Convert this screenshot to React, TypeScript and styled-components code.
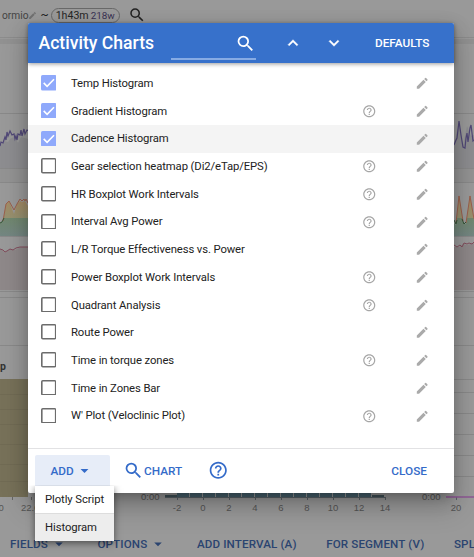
import styled, { createGlobalStyle } from 'styled-components';
import {
    MdArrowDropDown,
    MdEdit,
    MdHelpOutline,
    MdKeyboardArrowDown,
    MdKeyboardArrowUp,
    MdSearch,
} from 'react-icons/md';

const GlobalStyle = createGlobalStyle`
    * {
        box-sizing: border-box;
    }

    body {
        margin: 0;
        overflow: hidden;
        font-family: Roboto, sans-serif;
        color: #222;
    }

    button {
        font-family: inherit;
        border: none;
        background: none;
        padding: 0;
        white-space: nowrap;
    }

    svg {
        display: block;
        flex: none;
    }
`;

const Page = styled.div`
    position: relative;
    width: 474px;
    height: 557px;
    overflow: hidden;
    background: #999;
`;

const TopBar = styled.div`
    display: flex;
    align-items: center;
    height: 38px;
    padding: 0 0 7px 2px;
    font-size: 10.2px;
    color: #444;
    border-bottom: 1px solid #8c8c8c;
`;

const Tilde = styled.span`
    margin-left: 3px;
    font-size: 12px;
    color: #252525;
`;

const Pill = styled.span`
    display: flex;
    align-items: center;
    gap: 2px;
    height: 15px;
    margin: 0 8px 0 2px;
    padding: 0 4px;
    border: 1px solid #686868;
    border-radius: 8px;
    font-size: 10.6px;
    color: #252525;

    b {
        font-weight: 400;
        font-size: 9.9px;
        color: #393253;
    }
`;

const Charts = styled.div`
    height: 485px;
`;

const ActionBar = styled.div`
    display: flex;
    align-items: center;
    height: 41px;
    padding: 0 0 0 10px;
`;

const Action = styled.button`
    display: flex;
    align-items: center;
    flex: none;
    margin-right: 29.5px;
    font-size: 11.6px;
    font-weight: 500;
    letter-spacing: 0.14px;
    color: #2b4470;

    svg {
        margin-left: 2px;
    }
`;

const Dialog = styled.div`
    position: absolute;
    top: 23px;
    left: 28px;
    width: 426px;
    height: 469.5px;
    display: flex;
    flex-direction: column;
    background: #fff;
    border-radius: 2px;
    box-shadow: 0 7px 10px -5px rgba(0, 0, 0, 0.2), 0 14px 26px 2px rgba(0, 0, 0, 0.18), 0 5px 18px 2px rgba(0, 0, 0, 0.12);
`;

const Header = styled.div`
    display: flex;
    align-items: center;
    height: 40px;
    padding-left: 10.5px;
    color: #fff;
    background: #3771cb;
    border-radius: 2px 2px 0 0;
    box-shadow: 0 1px 4px rgba(0, 0, 0, 0.4);
`;

const Title = styled.h1`
    width: 132.5px;
    margin: 1px 0 0;
    font-size: 17.6px;
    line-height: 1;
    font-weight: 500;
    white-space: nowrap;
`;

const SearchField = styled.div`
    display: flex;
    justify-content: flex-end;
    align-items: center;
    width: 85px;
    height: 28px;
    margin: 6px 16px 0 0;
    padding-bottom: 4px;
    border-bottom: 2px solid #86abe4;
`;

const ArrowButton = styled.button`
    display: flex;
    justify-content: center;
    width: 41px;
    color: #fff;

    path:not([fill='none']) {
        stroke: currentColor;
        stroke-width: 0.5px;
    }

    path[fill='none'] {
        stroke: none;
    }
`;

const Defaults = styled.button`
    margin-left: 21px;
    font-size: 11.8px;
    font-weight: 500;
    color: #fff;
`;

const List = styled.div`
    flex: 1;
    padding-top: 6.7px;
`;

const Row = styled.div<{ $active: boolean }>`
    display: flex;
    align-items: center;
    height: 27.7px;
    padding: 0 24.5px 0 12.5px;
    background: ${({ $active }) => ($active ? '#f4f4f4' : 'transparent')};

    > svg:first-child {
        margin-bottom: 1px;
    }
`;

const Label = styled.span`
    flex: 1;
    margin-left: 15px;
    font-size: 11.3px;
    letter-spacing: -0.11px;
    white-space: nowrap;
`;

const Help = styled.span`
    width: 53px;
    color: #a6a6a6;
`;

const Footer = styled.div`
    position: relative;
    display: flex;
    align-items: center;
    height: 45px;
    padding: 0 27px 0 7px;
    border-top: 1px solid #e2e2e4;
`;

const FooterButton = styled.button<{ $push?: string }>`
    display: flex;
    align-items: center;
    margin-left: ${({ $push }) => $push || 0};
    font-size: 11.8px;
    font-weight: 500;
    color: #346bc9;
`;

const AddButton = styled(FooterButton)`
    gap: 1px;
    width: 75px;
    height: 31px;
    padding-left: 15.5px;
    background: #e7edf8;
    border-radius: 2px 2px 0 0;
`;

const Menu = styled.div`
    position: absolute;
    top: 37px;
    left: 7px;
    width: 79px;
    background: #fff;
    box-shadow: 0 2px 7px rgba(0, 0, 0, 0.5);
    clip-path: inset(0 -12px -12px -12px);
`;

const MenuItem = styled.div<{ $active?: boolean }>`
    height: 27.5px;
    padding-left: 10px;
    font-size: 11.3px;
    line-height: 27.5px;
    letter-spacing: -0.08px;
    white-space: nowrap;
    border-top: ${({ $active }) => ($active ? '1px solid #ddd' : 'none')};
    background: ${({ $active }) => ($active ? '#ededed' : '#fff')};
`;

interface Chart {
    name: string;
    checked?: boolean;
    help?: boolean;
    active?: boolean;
}

const charts: Chart[] = [
    { name: 'Temp Histogram', checked: true },
    { name: 'Gradient Histogram', checked: true, help: true },
    { name: 'Cadence Histogram', checked: true, active: true },
    { name: 'Gear selection heatmap (Di2/eTap/EPS)', help: true },
    { name: 'HR Boxplot Work Intervals', help: true },
    { name: 'Interval Avg Power', help: true },
    { name: 'L/R Torque Effectiveness vs. Power' },
    { name: 'Power Boxplot Work Intervals', help: true },
    { name: 'Quadrant Analysis', help: true },
    { name: 'Route Power' },
    { name: 'Time in torque zones', help: true },
    { name: 'Time in Zones Bar' },
    { name: "W' Plot (Veloclinic Plot)", help: true },
];

const bars = [177, 190, 203, 216, 229, 242, 255, 268, 281, 294, 307, 320, 333, 346, 359];
const ticks = [-2, 0, 2, 4, 6, 8, 10, 12, 14];

// Coordinates are page pixels, the drawing starts right below the top bar.
const ActivityPlots = () => (
    <svg width="474" height="485" viewBox="0 38 474 485" fontFamily="Roboto, sans-serif">
        <defs>
            <linearGradient id="power" x1="0" y1="195" x2="0" y2="236" gradientUnits="userSpaceOnUse">
                <stop offset="0" stopColor="#a16a5d" />
                <stop offset="0.15" stopColor="#a48a64" />
                <stop offset="0.55" stopColor="#969170" />
                <stop offset="0.56" stopColor="#71886f" />
                <stop offset="1" stopColor="#748682" />
            </linearGradient>
        </defs>
        <rect y="39" width="474" height="5" fill="#919191" />
        <g fill="#8d8d90">
            <path d="M0 146l4-5 4 1 2-3 4-2 4 6 3-6 7 2v29H0z" />
            <path d="M454 145l5-23 4 24 4-20 4 10 3-1v33h-20z" />
        </g>
        <g fill="none" stroke="#514877" strokeWidth="1.2">
            <path d="M0 146l1-4 2 1 2-6 1 3 1-8 1 4 2-5 2 4 2-1 1 5 1-3 1 4 1-6 2 1 1-5 1 6 2-7 1 5 2-4 2 1" />
            <path d="M454 145l2-5 1-2 2-17 2 14 2 12 2 1 1-10 1-5 1 9 2-14 1-3 2 16 1-1" />
        </g>
        <path d="M0 223l3-2 3-17 3-3 5 13 3-10 3-3 2 1 3-1 3 5v30H0z" fill="url(#power)" />
        <path d="M454 223l2 2 3-30 4 27 3 2 4-29 4 25v16h-20z" fill="url(#power)" />
        <path d="M3 221l3-17 3-3 5 9 3-6 3-5 2 2 2-2 1 2 1-2 2 4M456 223l3-27 4 25M466 223l4-27 4 23" fill="none" stroke="#9a604c" strokeWidth="1" />
        <path d="M0 223l2-1 2-4M454 220l2 4 1-4M462 219l2 5 2-2" fill="none" stroke="#355437" />
        <path d="M0 249l5 3 5-3 5 1 6-3h7v43H0zM454 247l5 0 4-3 4 1 7-2v47h-20z" fill="#8e8889" />
        <path d="M0 249l3 1 2 2 2-1 3-2 3 1 3-2 4-1h8M454 245l3 2 3-2 2 2 2-4 3 1 2-1 3 1 2-2" fill="none" stroke="#824d5c" />
        <path d="M0 113.5h474M0 168.5h474M0 182.5h474M0 236.5h474M0 291.5h474M0 297.5h474M0 345.5h474M454 379.5h20M454 392.5h20M454 413.5h20M454 434.5h20M454 455.5h20M454 476.5h20" stroke="#858585" strokeWidth="0.8" />
        <rect y="169" width="474" height="13" fill="#939393" />

        <rect y="379" width="28" height="118" fill="#777159" />
        <path d="M0 394.5h28M0 409.5h28M0 424.5h28M0 444.5h28M0 464.5h28M0 481.5h28" stroke="#716b54" />
        <text x="0" y="370" fontSize="10.5" fontWeight="700" fill="#333">p</text>
        <path d="M12.5 497v3M31.5 497v3" stroke="#666" />
        <g fontFamily="Liberation Sans, sans-serif" fontSize="9.5" fill="#555">
            <text x="-1.5" y="510.5">0</text>
            <text x="21" y="510.5">22.0</text>
            <text x="141" y="500">0:00</text>
            <text x="422" y="500">0:00</text>
            <text x="456" y="510.5" textAnchor="middle">20</text>
            {ticks.map((tick, i) => (
                <text key={tick} x={177 + i * 26} y="510.5" textAnchor="middle">{tick}</text>
            ))}
        </g>
        {bars.map((x) => (
            <rect key={x} x={x} y="485" width="12" height="12" fill="#48636f" />
        ))}
        <path d="M165 496h12M372 496h12" stroke="#44545b" strokeWidth="2" />
        <path d="M165 497.5h220M177.5 497v3M203.5 497v3M229.5 497v3M255.5 497v3M281.5 497v3M307.5 497v3M333.5 497v3M359.5 497v3M385.5 497v3M456.5 497v3" stroke="#5b646a" />
        <path d="M446 497h28" stroke="#8e5794" strokeWidth="1.5" />
    </svg>
);

const Checkbox = ({ checked }: { checked: boolean }) => (
    <svg width="15.5" height="15.5" viewBox="0 0 15.5 15.5" fill="none">
        {checked ? (
            <>
                <rect width="15.5" height="15.5" rx="1.6" fill="#8fa9fb" />
                <path d="M2.7 7.9l3.4 3.4 6.9-7" stroke="#fff" strokeWidth="1.6" />
            </>
        ) : (
            <rect x="0.8" y="0.8" width="13.9" height="13.9" rx="1" stroke="#6c6c6c" strokeWidth="1.6" />
        )}
    </svg>
);

const ChartRow = ({ chart }: { chart: Chart }) => (
    <Row $active={!!chart.active}>
        <Checkbox checked={!!chart.checked} />
        <Label>{chart.name}</Label>
        <Help>{chart.help && <MdHelpOutline size={14.5} />}</Help>
        <MdEdit size={14.5} color="#aaa" />
    </Row>
);

const App = () => (
    <>
        <GlobalStyle />
        <Page>
            <TopBar>
                ormio
                <MdEdit size={9} color="#707070" />
                <Tilde>~</Tilde>
                <Pill>1h43m <b>218w</b></Pill>
                <MdSearch size={18} color="#222" />
            </TopBar>
            <Charts><ActivityPlots /></Charts>
            <ActionBar>
                <Action>FIELDS <MdArrowDropDown size={18} /></Action>
                <Action>OPTIONS <MdArrowDropDown size={18} /></Action>
                <Action>ADD INTERVAL (A)</Action>
                <Action>FOR SEGMENT (V)</Action>
                <Action>SPL</Action>
            </ActionBar>

            <Dialog>
                <Header>
                    <Title>Activity Charts</Title>
                    <SearchField><MdSearch size={21} /></SearchField>
                    <ArrowButton><MdKeyboardArrowUp size={20} /></ArrowButton>
                    <ArrowButton><MdKeyboardArrowDown size={20} /></ArrowButton>
                    <Defaults>DEFAULTS</Defaults>
                </Header>
                <List>
                    {charts.map((chart) => <ChartRow key={chart.name} chart={chart} />)}
                </List>
                <Footer>
                    <AddButton>ADD <MdArrowDropDown size={19} /></AddButton>
                    <FooterButton $push="13px"><MdSearch size={21} />CHART</FooterButton>
                    <FooterButton $push="25.5px"><MdHelpOutline size={20.5} /></FooterButton>
                    <FooterButton $push="auto">CLOSE</FooterButton>
                    <Menu>
                        <MenuItem>Plotly Script</MenuItem>
                        <MenuItem $active>Histogram</MenuItem>
                    </Menu>
                </Footer>
            </Dialog>
        </Page>
    </>
);

export default App;
